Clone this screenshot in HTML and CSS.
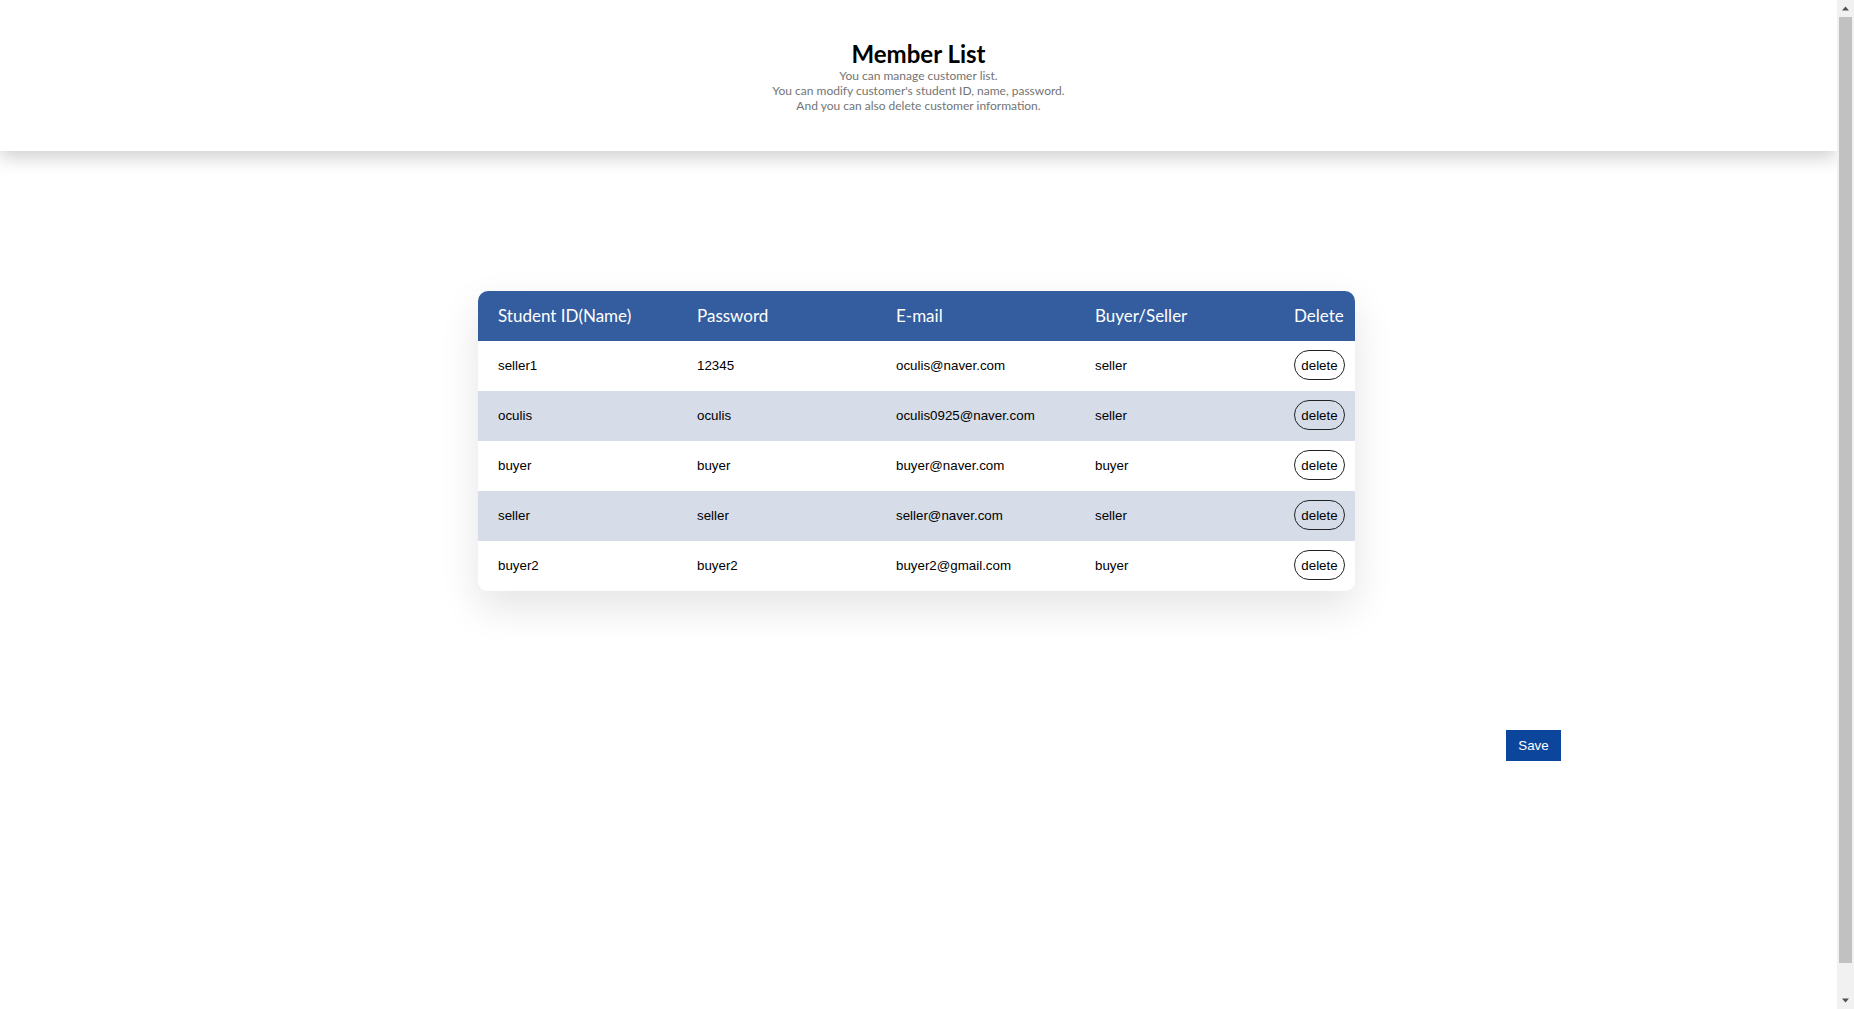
FILE: index.html
```html
<!DOCTYPE html>
<html lang="en">
<head>
<meta charset="utf-8">
<title>Member List</title>
<link rel="stylesheet" href="styles.css">
</head>
<body>
<header class="top">
  <h1 class="title">Member List</h1>
  <p class="sub">You can manage customer list.<br>You can modify customer's student ID, name, password.<br>And you can also delete customer information.</p>
</header>
<main class="main">
  <div class="card">
    <table class="list">
      <colgroup><col class="c"><col class="c"><col class="c"><col class="c"><col class="cd"></colgroup>
      <thead>
        <tr><th>Student ID(Name)</th><th>Password</th><th>E-mail</th><th>Buyer/Seller</th><th>Delete</th></tr>
      </thead>
      <tbody>
        <tr><td>seller1</td><td>12345</td><td>oculis@naver.com</td><td>seller</td><td><button class="del">delete</button></td></tr>
        <tr><td>oculis</td><td>oculis</td><td>oculis0925@naver.com</td><td>seller</td><td><button class="del">delete</button></td></tr>
        <tr><td>buyer</td><td>buyer</td><td>buyer@naver.com</td><td>buyer</td><td><button class="del">delete</button></td></tr>
        <tr><td>seller</td><td>seller</td><td>seller@naver.com</td><td>seller</td><td><button class="del">delete</button></td></tr>
        <tr><td>buyer2</td><td>buyer2</td><td>buyer2@gmail.com</td><td>buyer</td><td><button class="del">delete</button></td></tr>
      </tbody>
    </table>
  </div>
  <div class="actions">
    <button class="save">Save</button>
  </div>
</main>
<div class="scrollbar" aria-hidden="true">
  <svg class="arrow up" width="17" height="17" viewBox="0 0 17 17"><path d="M5 10.5 L8.5 6.5 L12 10.5 Z" fill="#505050"/></svg>
  <div class="thumb"></div>
  <svg class="arrow down" width="17" height="17" viewBox="0 0 17 17"><path d="M5 6.5 L8.5 10.5 L12 6.5 Z" fill="#505050"/></svg>
</div>
</body>
</html>
```

FILE: styles.css
```css
html, body {
  margin: 0;
  padding: 0;
  background: #fff;
}
body {
  font-family: "Liberation Sans", Arial, sans-serif;
  padding-right: 17px;
  height: 1009px;
  overflow: hidden;
}
.top {
  position: relative;
  z-index: 1;
  background: #fff;
  height: 151px;
  box-sizing: border-box;
  padding-top: 39px;
  text-align: center;
  box-shadow: 0 6px 18px rgba(0, 0, 0, 0.2);
}
.title {
  margin: 0;
  font-family: Lato, "Noto Sans", sans-serif;
  font-weight: 700;
  font-size: 24px;
  line-height: 29px;
  color: #000;
}
.sub {
  margin: 0;
  font-family: Lato, "Noto Sans", sans-serif;
  font-size: 12px;
  line-height: 15px;
  color: #747474;
}
.main {
  padding-top: 140px;
}
.card {
  width: 877px;
  margin: 0 auto;
  position: relative;
  left: -2px;
  border-radius: 10px;
  overflow: hidden;
  box-shadow: 0 16px 40px rgba(0, 0, 0, 0.11);
}
.list {
  width: 877px;
  table-layout: fixed;
  border-collapse: collapse;
  border-spacing: 0;
}
.c { width: 199px; }
.cd { width: 81px; }
.list th, .list td {
  height: 50px;
  padding: 0 0 2px 20px;
  text-align: left;
  vertical-align: middle;
  box-sizing: border-box;
  white-space: nowrap;
}
.list th {
  background: #335d9e;
  color: #fff;
  font-family: Lato, "Noto Sans", sans-serif;
  font-weight: 400;
  font-size: 17px;
}
.list td {
  font-size: 13.333px;
  color: #000;
}
.list tbody tr:nth-child(odd) td { background: #fff; }
.list tbody tr:nth-child(even) td { background: #d6dce8; }
.del {
  width: 51px;
  height: 30px;
  padding: 0;
  border: 1px solid #222;
  border-radius: 15px;
  background: transparent;
  font-family: "Liberation Sans", Arial, sans-serif;
  font-size: 13.333px;
  color: #000;
}
.actions {
  width: 1285px;
  margin: 139px auto 0;
  display: flex;
  justify-content: flex-end;
}
.save {
  width: 55px;
  height: 31px;
  padding: 0;
  border: none;
  background: #0b469c;
  color: #fff;
  font-family: "Liberation Sans", Arial, sans-serif;
  font-size: 13.333px;
}
.scrollbar {
  position: fixed;
  top: 0;
  right: 0;
  width: 17px;
  height: 1009px;
  z-index: 5;
  background: #f1f1f1;
  display: flex;
  flex-direction: column;
  align-items: center;
}
.arrow {
  display: block;
  flex: none;
}
.thumb {
  width: 13px;
  height: 946px;
  flex: none;
  background: #c1c1c1;
}
.arrow.down {
  margin-top: auto;
}
```
